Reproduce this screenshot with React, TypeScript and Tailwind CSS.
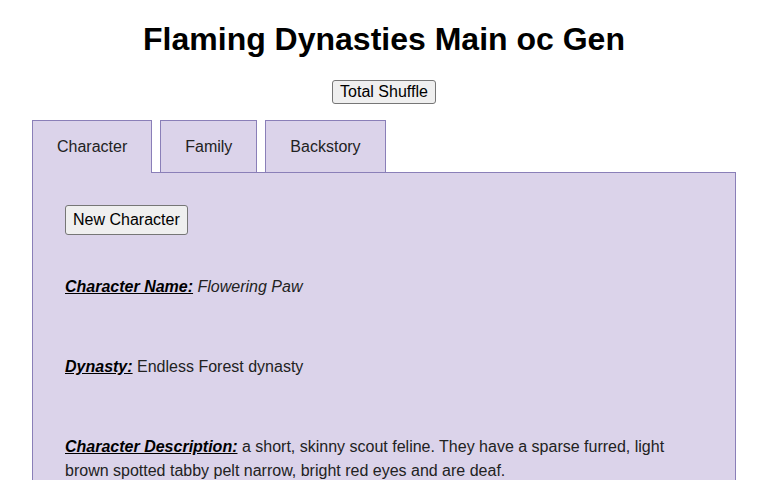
import React, { useState } from 'react'

type Tab = 'character' | 'family' | 'backstory'

const tabs: { id: Tab; label: string }[] = [
  { id: 'character', label: 'Character' },
  { id: 'family', label: 'Family' },
  { id: 'backstory', label: 'Backstory' },
]

export default function App() {
  const [activeTab, setActiveTab] = useState<Tab>('character')

  return (
    <div className="min-h-screen bg-white text-[#111] font-['Liberation_Sans',Arial,sans-serif] px-8">
      <h1 className="pt-[21px] text-center text-[32px] font-bold leading-[37px] text-black">
        Flaming Dynasties Main oc Gen
      </h1>

      <div className="mt-[22px] flex justify-center">
        <button className="h-[24px] rounded-[3px] border border-[#767676] bg-[#efefef] px-[7px] text-base leading-[20px] text-black">
          Total Shuffle
        </button>
      </div>

      <div className="mt-[16px] flex items-end gap-2">
        {tabs.map((tab) => (
          <button
            key={tab.id}
            onClick={() => setActiveTab(tab.id)}
            className={`relative flex items-center justify-center border border-b-0 border-[#8a7fb8] bg-[#dbd3ea] px-6 text-base text-[#222] ${
              activeTab === tab.id ? 'z-10 -mb-px h-[53px] pb-px' : 'h-[52px]'
            }`}
          >
            {tab.label}
          </button>
        ))}
      </div>

      <div className="border border-[#8a7fb8] bg-[#dbd3ea] px-8 pt-8 pb-10 text-base text-[#222]">
        {activeTab === 'character' && (
          <div>
            <button className="h-[30px] rounded-[3px] border border-[#767676] bg-[#efefef] px-[7px] text-base text-black">
              New Character
            </button>
            <p className="mt-[40px] leading-6">
              <em className="font-bold text-black underline">Character Name:</em> <em>Flowering Paw</em>
            </p>
            <p className="mt-[56px] leading-6">
              <em className="font-bold text-black underline">Dynasty:</em> Endless Forest dynasty
            </p>
            <p className="mt-[56px] leading-6">
              <em className="font-bold text-black underline">Character Description:</em> a short, skinny scout feline. They have
              a sparse furred, light brown spotted tabby pelt narrow, bright red eyes and are deaf.
            </p>
          </div>
        )}
        {activeTab === 'family' && <p className="leading-6">Family</p>}
        {activeTab === 'backstory' && <p className="leading-6">Backstory</p>}
      </div>
    </div>
  )
}
